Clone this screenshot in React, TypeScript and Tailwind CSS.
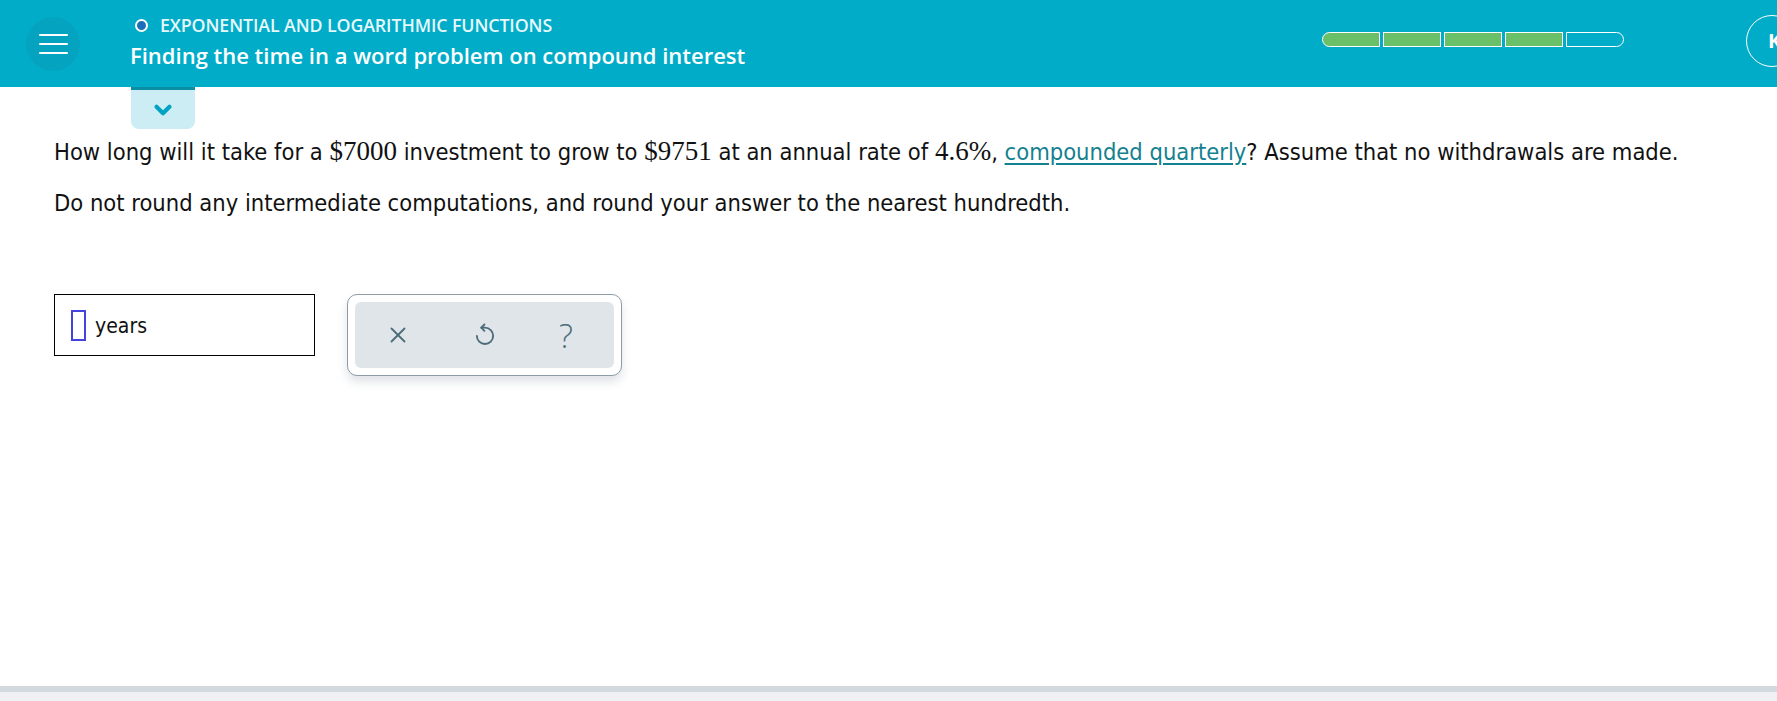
import { ChevronDown, X } from 'lucide-react';

const segments = [true, true, true, true, false];

function ProgressBar() {
  return (
    <div className="flex gap-[3px]">
      {segments.map((done, i) => (
        <div
          key={i}
          className={`h-[15px] w-[58px] border border-white ${done ? 'bg-[#6abf69]' : 'bg-transparent'} ${
            i === 0 ? 'rounded-l-full' : ''
          } ${i === segments.length - 1 ? 'rounded-r-full' : ''}`}
        />
      ))}
    </div>
  );
}

function UndoIcon() {
  return (
    <svg width="28" height="28" viewBox="0 0 24 24" fill="none" stroke="currentColor" strokeWidth="1.6" strokeLinecap="round" strokeLinejoin="round">
      <path d="M11.5 3 L8.8 5.7 L11.5 8.4" />
      <path d="M8.8 5.7 H12 A7 7 0 1 1 5 12.7" />
    </svg>
  );
}

function Header() {
  return (
    <div className="relative h-[87px] bg-[#00acc8] flex items-center overflow-hidden shrink-0">
      {/* Menu button */}
      <button className="ml-[26px] w-[54px] h-[54px] rounded-full bg-[#04a4c0] flex flex-col items-center justify-center gap-[7px]">
        <span className="block w-[29px] h-[2px] bg-white rounded" />
        <span className="block w-[29px] h-[2px] bg-white rounded" />
        <span className="block w-[29px] h-[2px] bg-white rounded" />
      </button>

      {/* Topic and title */}
      <div className="ml-[50px] mt-[-4px] flex flex-col font-['Open_Sans',sans-serif] text-white">
        <div className="flex items-center gap-[12px] h-[22px] mt-[1px]">
          <span className="w-[13px] h-[13px] rounded-full border-2 border-white bg-[#1a6fb8] ml-[5px]" />
          <span className="text-[17.8px] font-semibold tracking-[-0.1px] text-[#e6f8fb]">
            EXPONENTIAL AND LOGARITHMIC FUNCTIONS
          </span>
        </div>
        <div className="mt-[3px] text-[22px] font-semibold leading-[30px]">
          Finding the time in a word problem on compound interest
        </div>
      </div>

      <div className="ml-auto mr-[153px] mt-[-8px]">
        <ProgressBar />
      </div>

      {/* Avatar circle, cut by the window edge */}
      <div className="absolute left-[1746px] top-[15px] w-[52px] h-[52px] rounded-full border border-white flex items-center pl-[21px]">
        <span className="text-white font-bold text-[20px] font-['Open_Sans',sans-serif]">K</span>
      </div>
    </div>
  );
}

function ToolPanel() {
  return (
    <div className="w-[275px] h-[82px] rounded-[10px] border border-[#8d9ca6] bg-white p-[7px] shadow-[0_6px_10px_rgba(80,100,120,0.18)]">
      <div className="h-full rounded-[6px] bg-[#dfe5e8] flex items-center pl-[30px] text-[#4e6b7b]">
        <X className="w-[26px] h-[26px]" strokeWidth={1.7} />
        <span className="ml-[60px]">
          <UndoIcon />
        </span>
        <span className="ml-[60px] text-[33px] leading-none font-['Open_Sans',sans-serif] font-light">?</span>
      </div>
    </div>
  );
}

export default function App() {
  return (
    <div className="h-[701px] flex flex-col bg-white overflow-hidden">
      <Header />

      {/* Collapse tab */}
      <div className="ml-[131px] w-[64px] h-[42px] rounded-b-[8px] bg-[#cdedf4] border-t-[3px] border-[#0a8ea6] flex items-center justify-center shrink-0">
        <ChevronDown className="w-[26px] h-[26px] text-[#00a3c2]" strokeWidth={3.8} />
      </div>

      <div className="px-[54px] font-['DejaVu_Sans_Condensed','DejaVu_Sans',sans-serif] text-[23.5px] text-[#111]">
        <p className="mt-[5px] leading-[34px]">
          How long will it take for a{' '}
          <span className="font-['Liberation_Serif',serif] text-[27px]">$7000</span> investment to grow to{' '}
          <span className="font-['Liberation_Serif',serif] text-[27px]">$9751</span> at an annual rate of{' '}
          <span className="font-['Liberation_Serif',serif] text-[27px]">4.6%</span>,{' '}
          <span className="text-[#13818f] underline underline-offset-[3px]">compounded quarterly</span>? Assume that no
          withdrawals are made.
        </p>
        <p className="mt-[17px] leading-[34px]">
          Do not round any intermediate computations, and round your answer to the nearest hundredth.
        </p>

        <div className="mt-[74px] flex items-start gap-[32px]">
          <div className="w-[261px] h-[62px] border border-black flex items-center pl-[16px] gap-[9px]">
            <span className="w-[15px] h-[31px] border-2 border-[#4444dd]" />
            <span className="text-[21px] pt-[4px]">years</span>
          </div>
          <ToolPanel />
        </div>
      </div>

      <div className="flex-1" />
      <div className="h-[6px] bg-[#d2dadf] shrink-0" />
      <div className="h-[9px] bg-[#eff1f5] shrink-0" />
    </div>
  );
}
